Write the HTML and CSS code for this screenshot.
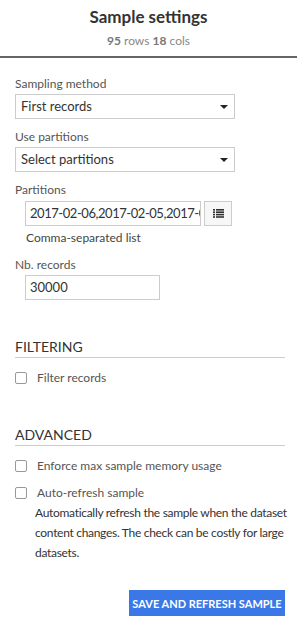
FILE: index.html
```html
<!DOCTYPE html>
<html lang="en">
<head>
  <meta charset="UTF-8">
  <title>Sample settings</title>
  <link rel="stylesheet" href="styles.css">
</head>
<body>

  <!-- 헤더 -->
  <div class="panel-header">
    <h1>Sample settings</h1>
    <div class="sample-size"><b>95</b> rows <b>18</b> cols</div>
  </div>

  <div class="panel-body">
    <!-- 샘플링 -->
    <div class="field">
      <label>Sampling method</label>
      <div class="select">First records<span class="caret"></span></div>
    </div>
    <div class="field">
      <label>Use partitions</label>
      <div class="select">Select partitions<span class="caret"></span></div>
    </div>
    <div class="field">
      <label>Partitions</label>
      <div class="indent">
        <div class="inline-row">
          <div class="input input-partitions">2017-02-06,2017-02-05,2017-02</div>
          <button class="icon-btn" title="List">
            <svg width="11" height="9" viewBox="0 0 11 9">
              <rect x="0" y="0" width="2" height="1.6" fill="#333"/>
              <rect x="3" y="0" width="8" height="1.6" fill="#333"/>
              <rect x="0" y="2.4" width="2" height="1.6" fill="#333"/>
              <rect x="3" y="2.4" width="8" height="1.6" fill="#333"/>
              <rect x="0" y="4.8" width="2" height="1.6" fill="#333"/>
              <rect x="3" y="4.8" width="8" height="1.6" fill="#333"/>
              <rect x="0" y="7.2" width="2" height="1.6" fill="#333"/>
              <rect x="3" y="7.2" width="8" height="1.6" fill="#333"/>
            </svg>
          </button>
        </div>
        <div class="help">Comma-separated list</div>
      </div>
    </div>
    <div class="field field-last">
      <label>Nb. records</label>
      <div class="indent">
        <div class="input input-small">30000</div>
      </div>
    </div>

    <!-- 필터링 -->
    <h2 class="section-title">FILTERING</h2>
    <div class="check-row"><span class="checkbox"></span>Filter records</div>

    <!-- 고급 -->
    <h2 class="section-title">ADVANCED</h2>
    <div class="check-row"><span class="checkbox"></span>Enforce max sample memory usage</div>
    <div class="check-row check-row-next"><span class="checkbox"></span>Auto-refresh sample</div>
    <p class="desc">Automatically refresh the sample when the dataset<br>content changes. The check can be costly for large<br>datasets.</p>

    <div class="actions">
      <button class="btn-primary">SAVE AND REFRESH SAMPLE</button>
    </div>
  </div>

</body>
</html>
```

FILE: styles.css
```css
/* 기본 스타일 */
body {
  font-family: Lato, "Open Sans", sans-serif;
  margin: 0;
  padding: 0;
  color: #333;
  background: #fff;
}

/* 헤더 */
.panel-header {
  width: 297px;
  height: 56px;
  border-bottom: 2px solid #666;
  text-align: center;
}
.panel-header h1 {
  margin: 0;
  padding-top: 6px;
  font-size: 17px;
  line-height: 22px;
  font-weight: bold;
  color: #333;
}
.sample-size {
  margin-top: 5px;
  font-size: 12px;
  line-height: 16px;
  color: #888;
}
.sample-size b {
  color: #777;
}

/* 폼 */
.panel-body {
  padding: 18px 16px 0 15px;
}
.field {
  margin-bottom: 10px;
}
.field-last {
  margin-bottom: 0;
}
.field label {
  display: block;
  font-size: 12px;
  line-height: 16px;
  color: #555;
  margin-bottom: 2px;
}
.select {
  position: relative;
  box-sizing: border-box;
  width: 220px;
  height: 25px;
  border: 1px solid #ccc;
  padding: 0 5px;
  font-size: 13px;
  line-height: 23px;
  color: #333;
}
.caret {
  position: absolute;
  right: 6px;
  top: 10px;
  width: 0;
  height: 0;
  border-left: 4px solid transparent;
  border-right: 4px solid transparent;
  border-top: 4px solid #222;
}
.indent {
  padding-left: 10px;
}
.inline-row {
  display: flex;
  gap: 3px;
  padding-top: 1px;
}
.input {
  box-sizing: border-box;
  height: 25px;
  border: 1px solid #ccc;
  padding: 0 4px;
  font-size: 13px;
  line-height: 23px;
  color: #333;
  white-space: nowrap;
  overflow: hidden;
}
.input-partitions {
  width: 176px;
  letter-spacing: -0.45px;
}
.input-small {
  width: 135px;
}
.icon-btn {
  box-sizing: border-box;
  width: 28px;
  height: 25px;
  padding: 0;
  border: 1px solid #ccc;
  background: #f7f7f7;
  display: flex;
  align-items: center;
  justify-content: center;
}
.help {
  margin-top: 4px;
  margin-bottom: 11px;
  padding-left: 1px;
  font-size: 12px;
  line-height: 16px;
  color: #444;
}

/* 섹션 */
.section-title {
  margin: 37px 0 0;
  font-size: 14px;
  line-height: 20px;
  font-weight: normal;
  color: #333;
  border-bottom: 1px solid #ccc;
}
.check-row {
  display: flex;
  align-items: center;
  margin-top: 10px;
  font-size: 12px;
  line-height: 20px;
  color: #555;
}
.check-row-next {
  margin-top: 7px;
}
.checkbox {
  box-sizing: border-box;
  width: 12px;
  height: 12px;
  border: 1px solid #999;
  border-radius: 2px;
  margin-right: 10px;
  background: #fff;
}
.desc {
  margin: 0 -12px 0 0;
  padding-left: 20px;
  font-size: 12px;
  line-height: 20px;
  letter-spacing: -0.3px;
  white-space: nowrap;
  color: #333;
}

/* 버튼 */
.actions {
  display: flex;
  justify-content: flex-end;
  margin-top: 27px;
}
.btn-primary {
  height: 26px;
  width: 156px;
  border: none;
  padding: 0;
  background: #3b78e7;
  color: #fff;
  font-family: inherit;
  font-size: 11px;
  font-weight: bold;
  cursor: pointer;
}
```
